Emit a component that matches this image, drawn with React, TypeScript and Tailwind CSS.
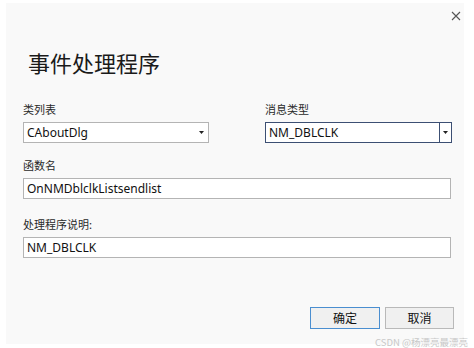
const ui = '"Segoe UI", "Noto Sans", "Noto Sans CJK SC", sans-serif';
const cjk = '"Microsoft YaHei", "Noto Sans CJK SC", sans-serif';

function Arrow() {
  return (
    <svg width="5" height="3" viewBox="0 0 5 3">
      <path d="M0 0h5L2.5 3z" fill="#222" />
    </svg>
  );
}

function Label({ text }: { text: string }) {
  return (
    <div className="h-[12px] text-[11px] leading-[12px] text-[#2a2a2a]" style={{ fontFamily: cjk }}>
      {text}
    </div>
  );
}

export default function App() {
  return (
    <div className="w-[474px] h-[348px] bg-white overflow-hidden">
      <div className="relative ml-[6px] mt-[3px] w-[458px] h-[341px] bg-[#f9f9f9] pl-[17px] pr-[10px] pt-[48px] flex flex-col">
        {/* close */}
        <svg className="absolute right-[3px] top-[8px]" width="10" height="10" viewBox="0 0 10 10">
          <path d="M1 1L9 9M9 1L1 9" stroke="#555" strokeWidth="1.1" />
        </svg>

        <div className="ml-[5px] h-[22px] text-[22px] leading-[22px] text-[#1a1a1a]" style={{ fontFamily: cjk }}>
          事件处理程序
        </div>

        <div className="mt-[30px] flex gap-[56px]">
          <div className="flex flex-col w-[186px]">
            <Label text="类列表" />
            <div className="mt-[7px] h-[21px] bg-white border border-[#b4b4b4] flex items-center pl-[3px] pr-[4px]">
              <span className="flex-1 text-[12px] text-[#111]" style={{ fontFamily: ui }}>CAboutDlg</span>
              <Arrow />
            </div>
          </div>
          <div className="flex flex-col w-[187px]">
            <Label text="消息类型" />
            <div className="mt-[7px] h-[21px] bg-white border border-[#3c4f73] flex items-stretch">
              <span className="flex-1 flex items-center pl-[3px] text-[12px] text-[#111]" style={{ fontFamily: ui }}>NM_DBLCLK</span>
              <div className="w-[12px] border-l border-[#3c4f73] flex items-center justify-center">
                <Arrow />
              </div>
            </div>
          </div>
        </div>

        <div className="mt-[16px]">
          <Label text="函数名" />
        </div>
        <div className="mt-[7px] w-[428px] h-[21px] bg-white border border-[#b4b4b4] flex items-center pl-[3px] text-[12px] text-[#111]" style={{ fontFamily: ui }}>
          OnNMDblclkListsendlist
        </div>

        <div className="mt-[19px]">
          <Label text="处理程序说明:" />
        </div>
        <div className="mt-[7px] w-[428px] h-[21px] bg-white border border-[#b4b4b4] flex items-center pl-[3px] text-[12px] text-[#111]" style={{ fontFamily: ui }}>
          NM_DBLCLK
        </div>

        <div className="mt-[49px] flex justify-end gap-[5px]" style={{ fontFamily: cjk }}>
          <button className="w-[70px] h-[22px] bg-[#f0f0f0] border border-[#4a8ed0] text-[12px] text-[#111]">确定</button>
          <button className="w-[69px] h-[22px] bg-[#f0f0f0] border border-[#b9b9b9] text-[12px] text-[#111]">取消</button>
        </div>

        <div className="absolute right-[-4px] top-[334px] text-[9.5px] leading-[11px] text-[#c8c8c8]" style={{ fontFamily: cjk }}>
          CSDN @杨漂亮最漂亮
        </div>
      </div>
    </div>
  );
}
